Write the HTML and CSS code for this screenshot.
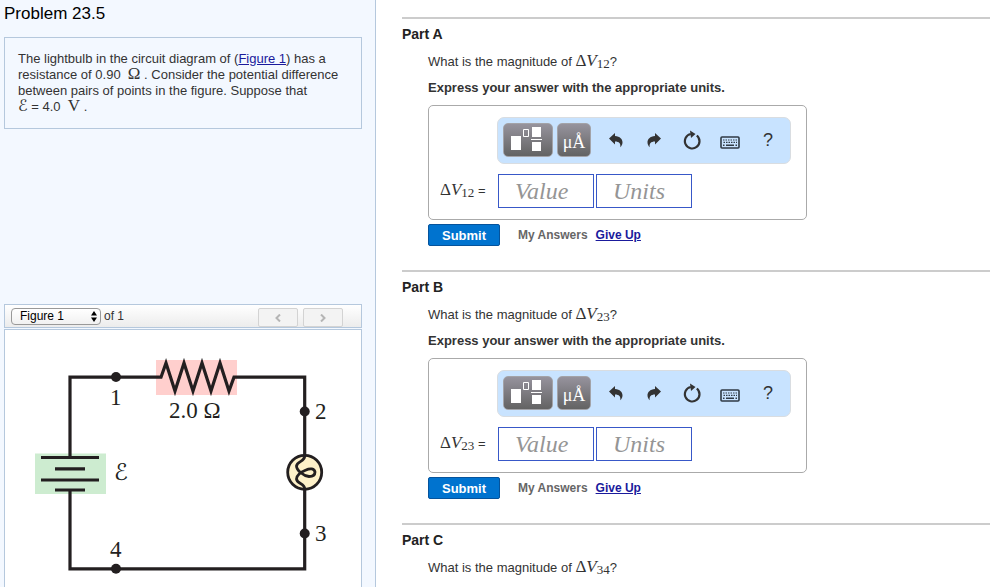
FILE: index.html
```html
<!DOCTYPE html>
<html lang="en">
<head>
  <meta charset="UTF-8" />
  <title>Problem 23.5</title>
  <link rel="stylesheet" href="styles.css">
</head>
<body>

<!-- shared toolbar icons -->
<svg class="sprite" aria-hidden="true">
  <symbol id="i-template" viewBox="0 0 50 34">
    <path fill="#fff" d="M8 13h10v14H8zM29 4h9v10h-9zM29 19h9v9h-9zM28 16h11v1H28z"/>
    <path fill="none" stroke="#fff" d="M20.500 6.500h5v7h-5z"/>
  </symbol>
  <symbol id="i-undo" viewBox="0 0 16 16">
    <path d="M1 6.500 7 1v3c5 .4 7.600 3.200 7.500 6.500-.1 2-.8 3.300-2.200 4.700.5-3.800-1-5.600-5.300-5.700V12.500z"/>
  </symbol>
  <symbol id="i-redo" viewBox="0 0 16 16">
    <path d="M15 6.500 9 1v3C4 4.400 1.400 7.200 1.500 10.500c.1 2 .8 3.300 2.200 4.700-.5-3.800 1-5.600 5.300-5.700v3z"/>
  </symbol>
  <symbol id="i-reset" viewBox="0 0 18 20">
    <path fill="none" stroke="#333" stroke-width="2.200" d="M13.800 5.500a7.300 7.300 0 1 1-6-1.500"/>
    <path d="M7 0.500 12.500 4 8 8z"/>
  </symbol>
  <symbol id="i-keyboard" viewBox="0 0 20 13">
    <rect x="1" y="1" width="18" height="11" rx="1" fill="none" stroke="#2f3a45" stroke-width="1.600"/>
    <path fill="none" stroke="#2f3a45" stroke-width="1.200" stroke-dasharray="1.500 1" d="M3 4h14M3.500 6.300h13.500"/>
    <path fill="none" stroke="#2f3a45" stroke-width="1.500" d="M3 9.200h1.500M6 9.200h8M15.500 9.200H17"/>
  </symbol>
</svg>

<div class="page">

  <aside class="sidebar">
    <h1>Problem 23.5</h1>
    <div class="intro">
      <p>The lightbulb in the circuit diagram of (<a href="#figure">Figure 1</a>) has a resistance of 0.90 &nbsp;<span class="math">Ω</span> . Consider the potential difference between pairs of points in the figure. Suppose that <br><span class="math emf">ℰ</span> = 4.0 &nbsp;<span class="math">V</span> .</p>
    </div>

    <div class="figure-bar">
      <span class="picker">
        <select id="figureSelect" aria-label="Figure"><option>Figure 1</option></select>
        <svg width="6" height="11" viewBox="0 0 6 11"><path d="M3 0 6 4.500H0zM3 11 0 6.500h6z"/></svg>
      </span>
      <label for="figureSelect">of 1</label>
      <div class="figure-nav">
        <button type="button" aria-label="Previous figure" disabled><svg width="6" height="8" viewBox="0 0 6 8"><path d="M5 .5 1.500 4 5 7.500"/></svg></button>
        <button type="button" aria-label="Next figure" disabled><svg width="6" height="8" viewBox="0 0 6 8"><path d="M1 .5 4.500 4 1 7.500"/></svg></button>
      </div>
    </div>

    <div class="figure" id="figure">
      <svg width="356" height="257" viewBox="5 330 356 257">
        <rect x="156" y="360" width="81" height="35" fill="#ffcfcd"/>
        <rect x="35" y="453.500" width="71" height="40.500" fill="#cdecd0"/>
        <g class="wire">
          <path d="M70 457V377.200H161L166 363 175 391 184 363 193 391 202 363 211 391 220 363 229 391 234 377.200H304.700V568.800H70V490"/>
          <path d="M41 457.500H99M55 468.800H85M41 480H99M55 490H85"/>
        </g>
        <circle cx="304.700" cy="472.300" r="17" fill="#fef1c9" stroke="#231f20" stroke-width="2.800"/>
        <path class="filament" d="M304.700 455.500C305 462 297 461 296.500 466 296.500 470 303 476 309 476.500 313 476.500 315 474.500 315 472 314.500 468.500 310 468 306 470 301 472 296.500 475 296.500 479 297 484 305 483 304.700 489"/>
        <g fill="#231f20">
          <circle cx="116" cy="377" r="5"/>
          <circle cx="304.700" cy="411.500" r="5"/>
          <circle cx="304.700" cy="533.500" r="5"/>
          <circle cx="116" cy="568.800" r="5"/>
        </g>
        <g class="labels">
          <text x="110" y="405">1</text>
          <text x="169" y="418">2.0 Ω</text>
          <text x="315" y="419">2</text>
          <text x="315" y="541">3</text>
          <text x="110" y="557">4</text>
          <text x="114" y="480" class="emf">ℰ</text>
        </g>
      </svg>
    </div>
  </aside>

  <main class="parts">

    <section class="part">
      <h2>Part A</h2>
      <div class="part-body">
        <p>What is the magnitude of <span class="math">Δ<i>V</i><sub>12</sub></span>?</p>
        <p class="hint">Express your answer with the appropriate units.</p>
        <form id="formA">
          <div class="answer">
            <div class="toolbar">
              <button type="button" class="key key-wide" aria-label="Templates"><svg width="50" height="34"><use href="#i-template"/></svg></button>
              <button type="button" class="key">μÅ</button>
              <button type="button" class="tool" aria-label="Undo"><svg width="16" height="16"><use href="#i-undo"/></svg></button>
              <button type="button" class="tool" aria-label="Redo"><svg width="16" height="16"><use href="#i-redo"/></svg></button>
              <button type="button" class="tool" aria-label="Reset"><svg width="18" height="20"><use href="#i-reset"/></svg></button>
              <button type="button" class="tool tool-kb" aria-label="Keyboard shortcuts"><svg width="20" height="13"><use href="#i-keyboard"/></svg></button>
              <button type="button" class="tool">?</button>
            </div>
            <label for="valueA"><span class="math">Δ<i>V</i><sub>12</sub></span> =</label>
            <div class="fields">
              <input type="text" id="valueA" placeholder="Value">
              <input type="text" id="unitsA" placeholder="Units" aria-label="Units">
            </div>
          </div>
          <div class="actions">
            <button type="submit" class="submit">Submit</button>
            <span>My Answers</span>
            <a href="#giveup">Give Up</a>
          </div>
        </form>
      </div>
    </section>

    <section class="part">
      <h2>Part B</h2>
      <div class="part-body">
        <p>What is the magnitude of <span class="math">Δ<i>V</i><sub>23</sub></span>?</p>
        <p class="hint">Express your answer with the appropriate units.</p>
        <form id="formB">
          <div class="answer">
            <div class="toolbar">
              <button type="button" class="key key-wide" aria-label="Templates"><svg width="50" height="34"><use href="#i-template"/></svg></button>
              <button type="button" class="key">μÅ</button>
              <button type="button" class="tool" aria-label="Undo"><svg width="16" height="16"><use href="#i-undo"/></svg></button>
              <button type="button" class="tool" aria-label="Redo"><svg width="16" height="16"><use href="#i-redo"/></svg></button>
              <button type="button" class="tool" aria-label="Reset"><svg width="18" height="20"><use href="#i-reset"/></svg></button>
              <button type="button" class="tool tool-kb" aria-label="Keyboard shortcuts"><svg width="20" height="13"><use href="#i-keyboard"/></svg></button>
              <button type="button" class="tool">?</button>
            </div>
            <label for="valueB"><span class="math">Δ<i>V</i><sub>23</sub></span> =</label>
            <div class="fields">
              <input type="text" id="valueB" placeholder="Value">
              <input type="text" id="unitsB" placeholder="Units" aria-label="Units">
            </div>
          </div>
          <div class="actions">
            <button type="submit" class="submit">Submit</button>
            <span>My Answers</span>
            <a href="#giveup">Give Up</a>
          </div>
        </form>
      </div>
    </section>

    <section class="part">
      <h2>Part C</h2>
      <div class="part-body">
        <p>What is the magnitude of <span class="math">Δ<i>V</i><sub>34</sub></span>?</p>
      </div>
    </section>

  </main>
</div>

</body>
</html>
```

FILE: styles.css
```css
* { box-sizing: border-box; }
body { margin: 0; background: #fff; color: #333; font: 13px/16px "Liberation Sans", Arial, sans-serif; }
h1, h2, p { margin: 0; }
a { color: #1a1a9c; }
button, input, select { font-family: inherit; margin: 0; }
svg { display: block; }
.sprite { display: none; }

.page { display: flex; min-height: 100vh; }

/* math */
.math { font-family: "Liberation Serif", "Times New Roman", serif; font-size: 17px; line-height: 0; }
.math sub { font-size: 13px; line-height: 0; vertical-align: -2px; }
.math.emf { font-family: "DejaVu Sans", sans-serif; font-size: 16px; font-style: italic; }

/* left side */
.sidebar { display: flex; flex-direction: column; width: 376px; flex-shrink: 0; padding: 0 13px 0 4px; background: #f3f8ff; border-right: 1px solid #b5c8dd; }
.sidebar h1 { padding: 4px 0 13px; font-size: 17px; line-height: 20px; font-weight: normal; color: #000; }
.intro { margin-bottom: auto; padding: 13px; border: 1px solid #b5c8dd; }

.figure-bar { display: flex; align-items: flex-start; height: 24px; margin-top: 20px; margin-bottom: 1px; padding: 3px 18px 0 6px; border: 1px solid #b5c8dd; background: linear-gradient(#fff, #ececec); font-size: 12px; }
.picker { position: relative; margin-right: 3px; }
.picker select { display: block; width: 90px; height: 17px; padding: 0 8px; appearance: none; border: 1px solid #999; border-radius: 4px; background: linear-gradient(#fff, #f1f1f1); font-size: 12px; line-height: 15px; color: #000; }
.picker svg { position: absolute; right: 4px; top: 3px; pointer-events: none; }
.figure-nav { display: flex; gap: 5px; margin-left: auto; }
.figure-nav button { display: flex; align-items: center; justify-content: center; width: 40px; height: 19px; padding: 0; border: 1px solid #d3d3d3; border-radius: 2px; background: #f3f3f3; }
.figure-nav path { fill: none; stroke: #b5b5b5; stroke-width: 2; }

.figure { border: 1px solid #b5c8dd; border-bottom: 0; background: #fff; }
.wire { fill: none; stroke: #231f20; stroke-width: 3.2; }
.filament { fill: none; stroke: #231f20; stroke-width: 2.8; }
.labels { font: 23px "Liberation Serif", "Times New Roman", serif; fill: #231f20; }
.labels .emf { font: italic 23px "DejaVu Sans", sans-serif; }

/* right side */
.parts { flex: 1; padding: 17px 15px 0 26px; }
.part { padding: 7px 0 24px; border-top: 2px solid #ccc; }
.part:last-child { padding-bottom: 0; }
.part h2 { font-size: 14px; line-height: 16px; color: #222; }
.part-body { padding: 12px 0 0 26px; }
.hint { margin: 10px 0 9px; font-weight: bold; }

.answer { display: grid; grid-template-columns: 57px 1fr; row-gap: 10px; align-items: center; max-width: 379px; padding: 11px 15px 11px 11px; border: 1px solid #aaa; border-radius: 5px; }
.toolbar { grid-column: 2; display: flex; align-items: center; height: 47px; padding: 0 3px 1px 5px; border: 1px solid #d9dde1; border-radius: 7px; background: #c8e3ff; }
.key { width: 34px; height: 34px; margin-right: 6px; padding: 3px 0 0; border: 1px solid #a3a3a8; border-radius: 5px; background: linear-gradient(#96939d, #636363); color: #fff; font: 18px/20px "Liberation Serif", "Times New Roman", serif; }
.key-wide { display: flex; align-items: center; justify-content: center; width: 50px; margin-right: 4px; padding: 0; }
.key-wide svg { flex-shrink: 0; }
.tool { display: flex; align-items: center; justify-content: center; width: 38px; height: 34px; padding: 0; border: 0; background: none; color: #333; fill: #333; font-size: 18px; }
.tool-kb { padding: 4px 0 0; }
.fields { display: flex; gap: 2px; padding-left: 1px; }
.fields input { width: 96px; height: 34px; padding: 0 16px; border: 1px solid #3858c8; background: #fff; font: italic 24px "Liberation Serif", "Times New Roman", serif; }
.fields input::placeholder { color: #959595; opacity: 1; }

.actions { display: flex; align-items: center; margin-top: 4px; font-size: 12px; font-weight: bold; color: #666; }
.actions span { margin: 0 8px 0 18px; }
.submit { width: 72px; height: 22px; padding: 0; border: 1px solid #05539c; border-radius: 2px; background: #0073cf; color: #fff; font-size: 13px; font-weight: bold; }
```
